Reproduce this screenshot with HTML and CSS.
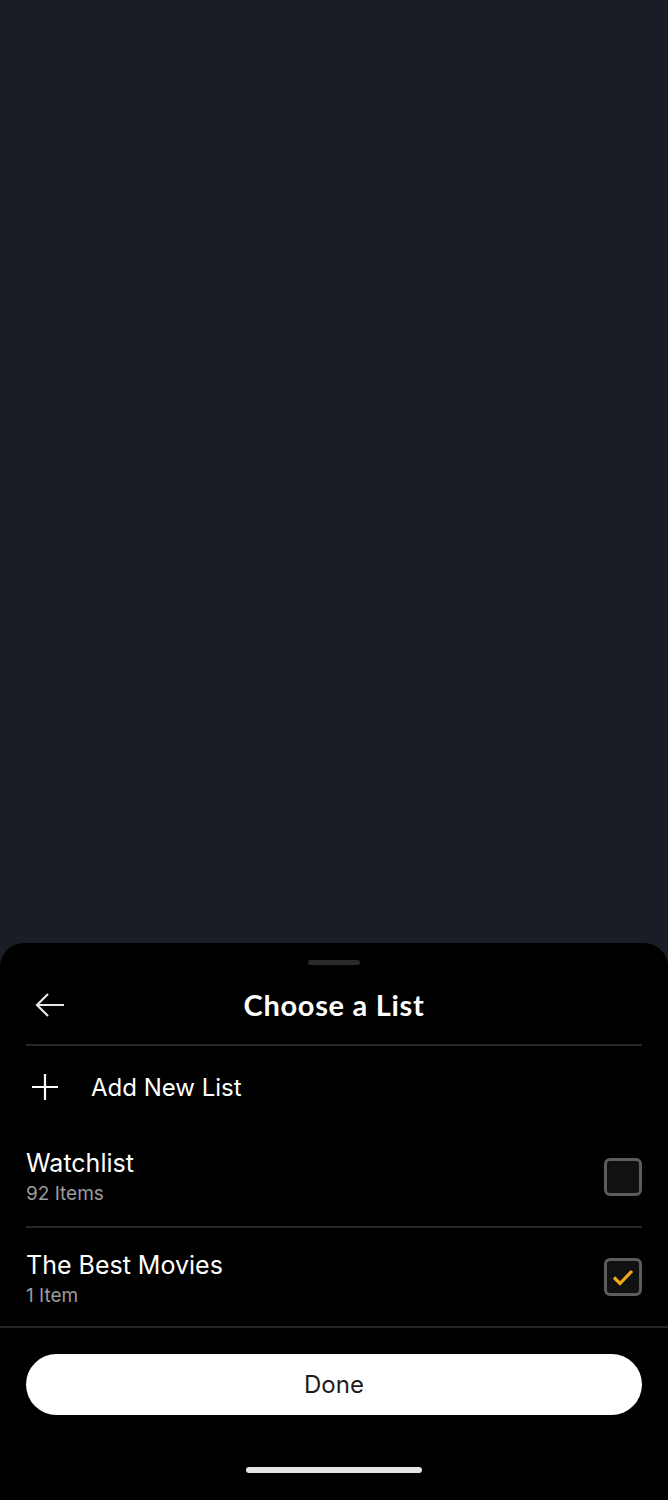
FILE: index.html
```html
<!DOCTYPE html>
<html lang="en">
<head>
    <meta charset="UTF-8">
    <title>Choose a List</title>
    <link rel="stylesheet" href="styles.css">
</head>
<body>
    <div class="screen">
        <div class="backdrop"></div>

        <div class="sheet">
            <div class="handle"></div>

            <div class="sheet-header">
                <button class="back-btn" aria-label="Back">
                    <svg width="32" height="28" viewBox="0 0 32 28">
                        <path d="M30 14H3M14 3L3 14l11 11" fill="none" stroke="#e6e6e6" stroke-width="2.2"/>
                    </svg>
                </button>
                <h1 class="sheet-title">Choose a List</h1>
            </div>

            <div class="add-row">
                <svg class="add-icon" width="28" height="28" viewBox="0 0 28 28">
                    <path d="M14 1v26M1 14h26" stroke="#ffffff" stroke-width="2.2"/>
                </svg>
                <span class="add-label">Add New List</span>
            </div>

            <div class="list-row">
                <div class="list-info">
                    <div class="list-name">Watchlist</div>
                    <div class="list-count">92 Items</div>
                </div>
                <span class="checkbox"></span>
            </div>

            <div class="list-row list-row--last">
                <div class="list-info">
                    <div class="list-name">The Best Movies</div>
                    <div class="list-count">1 Item</div>
                </div>
                <span class="checkbox checked">
                    <svg width="24" height="24" viewBox="0 0 24 24">
                        <path d="M3 12.5l6 6L21 6" fill="none" stroke="#f2a818" stroke-width="3.2"/>
                    </svg>
                </span>
            </div>

            <div class="sheet-footer">
                <button class="done-btn">Done</button>
                <div class="home-bar"></div>
            </div>
        </div>
    </div>
</body>
</html>
```

FILE: styles.css
```css
body {
    margin: 0;
    padding: 0;
    background-color: #1b1d26;
    font-family: Inter, Roboto, "Liberation Sans", sans-serif;
    color: #ffffff;
}

.screen {
    display: flex;
    flex-direction: column;
    height: 1500px;
    width: 668px;
    overflow: hidden;
}

.backdrop {
    flex: 1;
    background-color: #1b1d26;
}

.sheet {
    height: 557px;
    background-color: #000000;
    border-radius: 24px 24px 0 0;
    display: flex;
    flex-direction: column;
}

.handle {
    width: 52px;
    height: 5px;
    border-radius: 3px;
    background-color: #2a2a2a;
    margin: 17px auto 0;
}

.sheet-header {
    position: relative;
    height: 81px;
    margin: 0 26px;
    border-bottom: 2px solid #262626;
    display: flex;
    align-items: center;
    justify-content: center;
    box-sizing: border-box;
}

.back-btn {
    position: absolute;
    left: 8px;
    top: 26px;
    background: none;
    border: none;
    padding: 0;
    display: flex;
}

.sheet-title {
    margin: 0;
    font-family: Lato, "Liberation Sans", sans-serif;
    font-weight: 700;
    font-size: 29px;
    letter-spacing: 0.7px;
}

.add-row {
    height: 82px;
    display: flex;
    align-items: center;
    padding: 0 26px 0 31px;
    gap: 32px;
}

.add-label {
    font-size: 24px;
}

.list-row {
    height: 100px;
    margin: 0 26px;
    display: flex;
    align-items: center;
    justify-content: space-between;
    border-bottom: 2px solid #262626;
    box-sizing: border-box;
}

.list-row--last {
    margin: 0;
    padding: 0 26px;
}

.list-row--last .list-info {
    padding-top: 3px;
}

.list-info {
    display: flex;
    flex-direction: column;
    gap: 6px;
}

.list-name {
    font-size: 25px;
    line-height: 28px;
}

.list-count {
    font-size: 19px;
    line-height: 22px;
    color: #9c9c9c;
}

.checkbox {
    width: 38px;
    height: 38px;
    box-sizing: border-box;
    border: 3px solid #5c5c5c;
    border-radius: 6px;
    background-color: #111111;
    display: flex;
    align-items: center;
    justify-content: center;
}

.sheet-footer {
    flex: 1;
    display: flex;
    flex-direction: column;
    align-items: center;
    padding: 26px 26px 0;
}

.done-btn {
    width: 100%;
    height: 61px;
    border: none;
    border-radius: 31px;
    background-color: #ffffff;
    color: #1c1c1c;
    font-family: Inter, Roboto, "Liberation Sans", sans-serif;
    font-size: 24px;
}

.home-bar {
    width: 176px;
    height: 6px;
    border-radius: 3px;
    background-color: #e4e4e4;
    margin-top: 52px;
}
```
